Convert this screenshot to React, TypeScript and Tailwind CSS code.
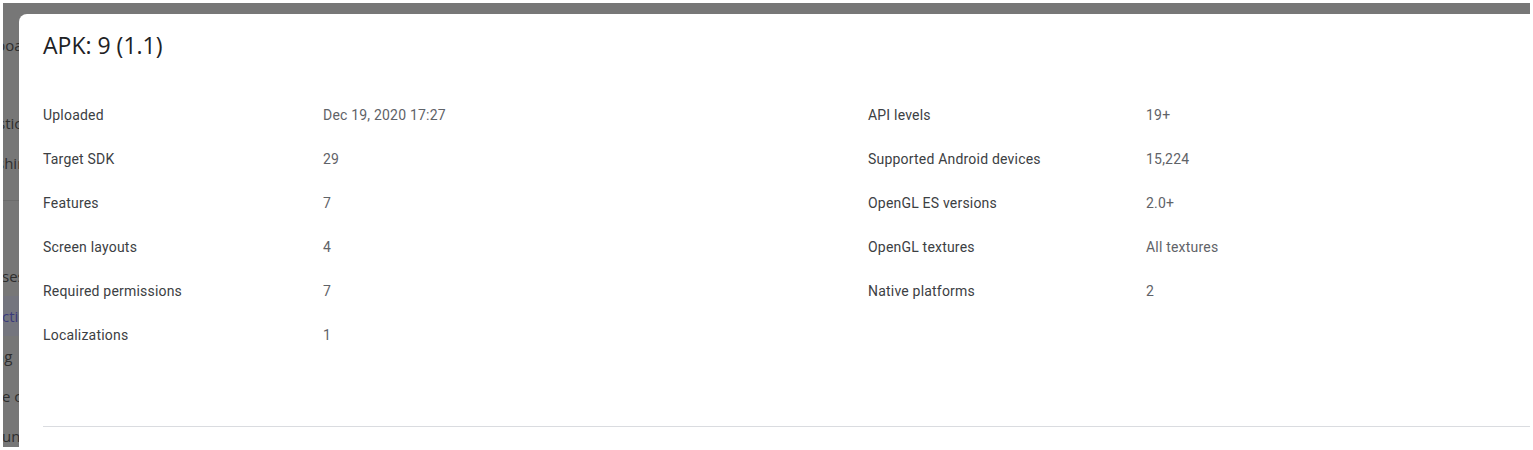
import React from 'react';

const leftRows = [
  ['Uploaded', 'Dec 19, 2020 17:27'],
  ['Target SDK', '29'],
  ['Features', '7'],
  ['Screen layouts', '4'],
  ['Required permissions', '7'],
  ['Localizations', '1'],
];

const rightRows = [
  ['API levels', '19+'],
  ['Supported Android devices', '15,224'],
  ['OpenGL ES versions', '2.0+'],
  ['OpenGL textures', 'All textures'],
  ['Native platforms', '2'],
];

const Row: React.FC<{ label: string; value: string; labelWidth: string }> = ({ label, value, labelWidth }) => (
  <div className="flex h-11 items-center text-[14px] tracking-[0.2px]">
    <div className={`${labelWidth} shrink-0 text-[#3c4043]`}>{label}</div>
    <div className="text-[#5f6368]">{value}</div>
  </div>
);

// sidebar behind the scrim, only a sliver shows
const Sliver: React.FC<{ text: string; shift: string; tone?: string }> = ({ text, shift, tone = 'text-[#2e2e2e]' }) => (
  <div className={`h-10 flex items-center whitespace-nowrap ${tone}`}>
    <span className={shift}>{text}</span>
  </div>
);

const App: React.FC = () => {
  return (
    <div className="w-[1533px] h-[450px] bg-white p-[3px]" style={{ fontFamily: 'Roboto, "Liberation Sans", sans-serif' }}>
      <div className="flex h-full overflow-hidden bg-[#777777]">
        <div className="w-[16px] shrink-0 overflow-hidden text-[15px] font-['Open_Sans',sans-serif]">
          <div className="h-[22px]" />
          <Sliver text="boa" shift="-ml-[7px]" />
          <div className="h-[38px]" />
          <Sliver text="stic" shift="-ml-[5px]" />
          <Sliver text="shin" shift="-ml-[6px]" />
          <div className="h-[17px]" />
          <div className="border-t border-[#6c6c6c]" />
          <div className="h-[55px]" />
          <Sliver text="ses" shift="-ml-[1px]" />
          <div className="bg-[#74757e]">
            <Sliver text="ctio" shift="-ml-[1px]" tone="text-[#3a3a7c]" />
          </div>
          <Sliver text="ng" shift="-ml-[8px]" />
          <Sliver text="e c" shift="-ml-[1px]" />
          <Sliver text="un" shift="-ml-[1px]" />
        </div>

        <div className="mt-[11px] flex-1 rounded-tl-[8px] bg-white">
          <div className="pl-6 pt-[17px]">
            <h1 className="text-[23px] leading-[28px] text-[#202124] font-['Open_Sans',sans-serif]">APK: 9 (1.1)</h1>
          </div>
          <div className="mt-[34px] flex pl-6">
            <div className="w-[825px] shrink-0">
              {leftRows.map(([l, v]) => (
                <Row key={l} label={l} value={v} labelWidth="w-[280px]" />
              ))}
            </div>
            <div>
              {rightRows.map(([l, v]) => (
                <Row key={l} label={l} value={v} labelWidth="w-[278px]" />
              ))}
            </div>
          </div>
          <div className="ml-6 mt-[69px] border-t border-[#dadce0]" />
        </div>
      </div>
    </div>
  );
};

export default App;
